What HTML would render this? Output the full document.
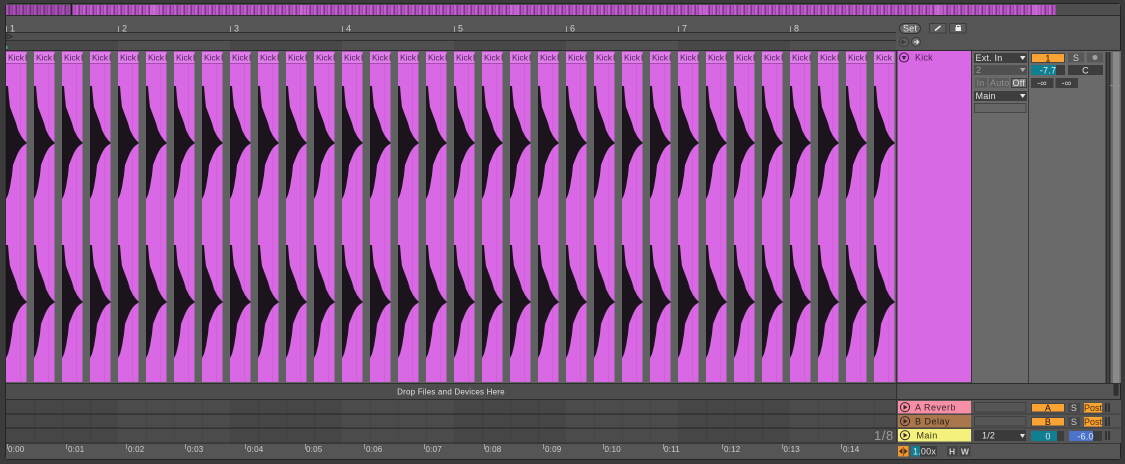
<!DOCTYPE html>
<html><head><meta charset="utf-8"><style>
html,body{margin:0;padding:0;background:#3b3b3b;width:1125px;height:464px;overflow:hidden}
svg{display:block;filter:blur(.3px)}
text{font-family:"Liberation Sans",sans-serif;letter-spacing:.2px}
.k{font-size:8.5px;fill:#4e1f5a;letter-spacing:0;word-spacing:-1.5px}
.b{font-size:9px;fill:#d0d0d0}
.t{font-size:8px;fill:#cfcfcf}
.d{font-size:9px;fill:#1d1408}
.l{font-size:9px;fill:#e2e2e2}
</style></head><body>
<svg width="1125" height="464" viewBox="0 0 1125 464" xmlns="http://www.w3.org/2000/svg">
<defs>
<pattern id="ov" width="7" height="10" patternUnits="userSpaceOnUse" x="6" y="5">
<rect width="7" height="10" fill="#9a4aa6"/><rect x="0" width="2" height="10" fill="#c35fd0"/><rect x="3" width="1" height="10" fill="#7b3b86"/><rect x="4" width="2" height="10" fill="#b355bf"/>
</pattern>
<g id="c">
<rect width="20.5" height="331" y="51" fill="#d968e4"/>
<rect x="14" y="64" width="1" height="318" fill="#cf60da"/>
<rect y="51" width="20.5" height="13" fill="#e07fea"/>
<path d="M0 51.5H20.5M0 63.5H20.5" stroke="#a94bb4" stroke-width="1" fill="none"/>
<path fill="#1b141c" d="M0 86L2 86L3 98L4 107L7 115L10 123L12 130L15 136L18 140L21 143L17 146L15 148L13 151L11 155L9 160L7 165L6 175L4 187L2 195L0 199Z"/>
<path fill="#1b141c" transform="translate(0 159)" d="M0 86L2 86L3 98L4 107L7 115L10 123L12 130L15 136L18 140L21 143L17 146L15 148L13 151L11 155L9 160L7 165L6 175L4 187L2 195L0 199Z"/>
</g>
<g id="pl"><circle r="4.6" fill="none" stroke="#3d2428" stroke-width="1"/><path d="M-1.5 -2.5L2.5 0L-1.5 2.5Z" fill="#3d2428"/></g>
</defs>

<!-- frame -->
<rect width="1125" height="464" fill="#3b3b3b"/>
<rect x="5" y="3" width="1116" height="456" rx="3" fill="#555"/>
<rect x="5.5" y="3.5" width="1115" height="456" rx="3" fill="none" stroke="#242424"/>

<!-- overview -->
<rect x="6" y="4" width="1114" height="11.5" fill="#4f4f4f"/>
<rect x="6" y="5" width="1050" height="10" fill="url(#ov)"/>
<rect x="6" y="5" width="65" height="10" fill="#3a1040" opacity=".18"/>
<rect x="150" y="5" width="8" height="10" fill="#d66fe2" opacity=".6"/><rect x="300" y="5" width="6" height="10" fill="#d66fe2" opacity=".5"/><rect x="510" y="5" width="9" height="10" fill="#d66fe2" opacity=".5"/><rect x="700" y="5" width="7" height="10" fill="#d66fe2" opacity=".5"/><rect x="935" y="5" width="7" height="10" fill="#d66fe2" opacity=".6"/><rect x="1032" y="5" width="8" height="10" fill="#d66fe2" opacity=".6"/>
<rect x="70.5" y="4" width="1.5" height="11" fill="#1c1c1c"/>
<rect x="5" y="15" width="1116" height="1" fill="#2b2b2b"/>

<!-- ruler -->
<rect x="6" y="16" width="1114" height="34" fill="#555"/>
<g fill="#303030"><rect x="6" y="32" width="890" height="1"/><rect x="6" y="40" width="890" height="1"/></g>
<rect x="6" y="33" width="890" height="7" fill="#505050"/>
<path d="M7 34L12 36.5L7 39Z" fill="none" stroke="#2e2e2e"/>
<rect x="6" y="41" width="890" height="9" fill="#484848"/>
<g fill="#505050"><rect x="118" y="41" width="112" height="9"/><rect x="342" y="41" width="112" height="9"/><rect x="566" y="41" width="112" height="9"/><rect x="790" y="41" width="106" height="9"/></g>
<g fill="#a8a8a8"><rect x="6" y="26" width="1" height="6"/><rect x="118" y="26" width="1" height="6"/><rect x="230" y="26" width="1" height="6"/><rect x="342" y="26" width="1" height="6"/><rect x="454" y="26" width="1" height="6"/><rect x="566" y="26" width="1" height="6"/><rect x="678" y="26" width="1" height="6"/><rect x="790" y="26" width="1" height="6"/></g>
<text class="b" x="10" y="31.5">1</text><text class="b" x="122" y="31.5">2</text><text class="b" x="234" y="31.5">3</text><text class="b" x="346" y="31.5">4</text><text class="b" x="458" y="31.5">5</text><text class="b" x="570" y="31.5">6</text><text class="b" x="682" y="31.5">7</text><text class="b" x="794" y="31.5">8</text>
<rect x="6" y="46" width="1.5" height="3" fill="#4aa0a8"/>

<!-- Set controls -->
<rect x="899.5" y="23.5" width="21" height="10" rx="5" fill="#686868" stroke="#333"/>
<text x="910" y="31.5" text-anchor="middle" style="font-size:9px;fill:#e4e4e4">Set</text>
<rect x="929.5" y="23.5" width="16.5" height="9.5" fill="#5c5c5c" stroke="#3d3d3d"/>
<path d="M935 30.5L940.5 26" stroke="#f0f0f0" stroke-width="1.5"/>
<rect x="949.5" y="23.5" width="16.5" height="9.5" fill="#5c5c5c" stroke="#3d3d3d"/>
<rect x="955.5" y="27" width="5.5" height="4" fill="#f0f0f0"/><path d="M956.5 27V25.5H960V27" fill="none" stroke="#f0f0f0"/>
<circle cx="904" cy="42" r="4.5" fill="#5f5f5f" stroke="#3b3b3b"/><path d="M906.2 42H901.8M903.5 40L901.5 42L903.500 44" stroke="#2f2f2f" fill="none"/>
<circle cx="916" cy="42" r="4.5" fill="#6c6c6c" stroke="#3b3b3b"/><path d="M913.8 42H918.2M916.5 40L918.5 42L916.5 44" stroke="#f0f0f0" fill="none"/>
<rect x="5" y="50" width="1116" height="1.2" fill="#2c2c2c"/>

<!-- clip lane -->
<rect x="6" y="51" width="890" height="332" fill="#606161"/>
<rect x="5" y="51" width="1" height="332" fill="#2f2f2f"/>
<use href="#c" x="6"/><use href="#c" x="34"/><use href="#c" x="62"/><use href="#c" x="90"/><use href="#c" x="118"/><use href="#c" x="146"/><use href="#c" x="174"/><use href="#c" x="202"/><use href="#c" x="230"/><use href="#c" x="258"/><use href="#c" x="286"/><use href="#c" x="314"/><use href="#c" x="342"/><use href="#c" x="370"/><use href="#c" x="398"/><use href="#c" x="426"/><use href="#c" x="454"/><use href="#c" x="482"/><use href="#c" x="510"/><use href="#c" x="538"/><use href="#c" x="566"/><use href="#c" x="594"/><use href="#c" x="622"/><use href="#c" x="650"/><use href="#c" x="678"/><use href="#c" x="706"/><use href="#c" x="734"/><use href="#c" x="762"/><use href="#c" x="790"/><use href="#c" x="818"/><use href="#c" x="846"/><use href="#c" x="874"/>
<text class="k" x="8" y="60.5">Kick I</text><text class="k" x="36" y="60.5">Kick I</text><text class="k" x="64" y="60.5">Kick I</text><text class="k" x="92" y="60.5">Kick I</text><text class="k" x="120" y="60.5">Kick I</text><text class="k" x="148" y="60.5">Kick I</text><text class="k" x="176" y="60.5">Kick I</text><text class="k" x="204" y="60.5">Kick I</text><text class="k" x="232" y="60.5">Kick I</text><text class="k" x="260" y="60.5">Kick I</text><text class="k" x="288" y="60.5">Kick I</text><text class="k" x="316" y="60.5">Kick I</text><text class="k" x="344" y="60.5">Kick I</text><text class="k" x="372" y="60.5">Kick I</text><text class="k" x="400" y="60.5">Kick I</text><text class="k" x="428" y="60.5">Kick I</text><text class="k" x="456" y="60.5">Kick I</text><text class="k" x="484" y="60.5">Kick I</text><text class="k" x="512" y="60.5">Kick I</text><text class="k" x="540" y="60.5">Kick I</text><text class="k" x="568" y="60.5">Kick I</text><text class="k" x="596" y="60.5">Kick I</text><text class="k" x="624" y="60.5">Kick I</text><text class="k" x="652" y="60.5">Kick I</text><text class="k" x="680" y="60.5">Kick I</text><text class="k" x="708" y="60.5">Kick I</text><text class="k" x="736" y="60.5">Kick I</text><text class="k" x="764" y="60.5">Kick I</text><text class="k" x="792" y="60.5">Kick I</text><text class="k" x="820" y="60.5">Kick I</text><text class="k" x="848" y="60.5">Kick I</text><text class="k" x="876" y="60.5">Kick</text>

<!-- track head -->
<rect x="896" y="51" width="1.5" height="332" fill="#333"/>
<rect x="897.5" y="51" width="73.5" height="331" fill="#d868e3"/>
<circle cx="904" cy="57.5" r="4.6" fill="none" stroke="#3f1d48"/><path d="M901.7 56L906.3 56L904 60Z" fill="#3f1d48"/>
<text x="915" y="60.5" style="font-size:9px;fill:#4e1f5a">Kick</text>
<rect x="971" y="51" width="1" height="332" fill="#333"/>
<rect x="972" y="51" width="56" height="332" fill="#6a6a6a"/>
<rect x="1028" y="51" width="1" height="332" fill="#3a3a3a"/>
<rect x="1029" y="51" width="92" height="332" fill="#6a6a6a"/>

<rect x="974" y="53" width="53" height="10" fill="#3e3e3e"/><text class="l" x="975.5" y="61">Ext. In</text><path d="M1020 56H1025.5L1022.7 60Z" fill="#e6e6e6"/>
<rect x="974" y="65" width="53" height="10" fill="#505050"/><text x="976" y="73" style="font-size:9px;fill:#999">2</text><path d="M1020 68H1025.5L1022.7 72Z" fill="#aaa"/>
<rect x="975" y="78" width="12" height="9.5" fill="#5b5b5b"/><text x="976.5" y="86" style="font-size:9px;fill:#909090">In</text>
<rect x="989" y="78" width="20" height="9.5" fill="#5b5b5b"/><text x="990" y="86" style="font-size:9px;fill:#909090">Auto</text>
<rect x="1011.5" y="78.500" width="15" height="9" fill="#6e6e6e" stroke="#3c3c3c"/><text x="1012.5" y="86" style="font-size:9px;fill:#e2e2e2">Off</text>
<rect x="974" y="91" width="53" height="10" fill="#3e3e3e"/><text class="l" x="975.5" y="99">Main</text><path d="M1020 94H1025.5L1022.7 98Z" fill="#e6e6e6"/>
<rect x="974.5" y="103.5" width="51.5" height="9" fill="#666" stroke="#454545"/>

<rect x="1031.5" y="53.5" width="33" height="9" fill="#fba433" stroke="#444"/><text x="1048" y="61.500" text-anchor="middle" class="d">1</text>
<rect x="1068" y="52.5" width="16" height="10" fill="#585858"/><text x="1076" y="61" text-anchor="middle" style="font-size:9px;fill:#d0d0d0">S</text>
<rect x="1087" y="52.5" width="16" height="10" fill="#585858"/><circle cx="1095" cy="57.5" r="2.5" fill="#a0a0a0"/>
<rect x="1031" y="65" width="34" height="10" fill="#3d3d3d"/><rect x="1031" y="65" width="25" height="10" fill="#107f92"/><text x="1048" y="73.500" text-anchor="middle" style="font-size:9px;fill:#d8ecf0">-7.7</text>
<rect x="1068" y="65" width="35" height="10" fill="#3d3d3d"/><text x="1085.5" y="73.500" text-anchor="middle" style="font-size:9px;fill:#e2e2e2">C</text>
<rect x="1031" y="78" width="22.5" height="10" fill="#3f3f3f"/><text x="1042" y="86" text-anchor="middle" style="font-size:9px;fill:#dcdcdc">-∞</text>
<rect x="1055.5" y="78" width="22.5" height="10" fill="#3f3f3f"/><text x="1066.5" y="86" text-anchor="middle" style="font-size:9px;fill:#dcdcdc">-∞</text>

<rect x="1105.5" y="52" width="5" height="331" fill="#2e2e2e"/><rect x="1107.5" y="52" width="1" height="331" fill="#555"/>
<rect x="1113" y="52" width="6.5" height="331" fill="#8a8a8a"/>
<rect x="1110" y="85" width="10" height="1" fill="#8c8c8c"/>

<!-- drop row -->
<rect x="6" y="383" width="1114" height="1" fill="#2e2e2e"/>
<rect x="6" y="384" width="890" height="15" fill="#4d4d4d"/>
<rect x="898" y="384" width="222" height="15" fill="#555"/>
<text x="451" y="394.5" text-anchor="middle" style="font-size:8px;fill:#e0e0e0">Drop Files and Devices Here</text>
<rect x="1113.5" y="383" width="5" height="13" rx="2" fill="#2f2f2f"/>
<rect x="5" y="399" width="1116" height="1.2" fill="#2c2c2c"/>

<!-- return lanes -->
<rect x="6" y="400" width="890" height="43" fill="#464646"/>
<g fill="#4b4b4b"><rect x="118" y="400" width="112" height="43"/><rect x="342" y="400" width="112" height="43"/><rect x="566" y="400" width="112" height="43"/><rect x="790" y="400" width="106" height="43"/></g>
<g fill="#3f3f3f"><rect x="34" y="400" width="1" height="43"/><rect x="62" y="400" width="1" height="43"/><rect x="90" y="400" width="1" height="43"/><rect x="146" y="400" width="1" height="43" opacity=".4"/><rect x="174" y="400" width="1" height="43" opacity=".4"/><rect x="202" y="400" width="1" height="43" opacity=".4"/><rect x="258" y="400" width="1" height="43"/><rect x="286" y="400" width="1" height="43"/><rect x="314" y="400" width="1" height="43"/><rect x="370" y="400" width="1" height="43" opacity=".4"/><rect x="398" y="400" width="1" height="43" opacity=".4"/><rect x="426" y="400" width="1" height="43" opacity=".4"/><rect x="482" y="400" width="1" height="43"/><rect x="510" y="400" width="1" height="43"/><rect x="538" y="400" width="1" height="43"/><rect x="594" y="400" width="1" height="43" opacity=".4"/><rect x="622" y="400" width="1" height="43" opacity=".4"/><rect x="650" y="400" width="1" height="43" opacity=".4"/><rect x="706" y="400" width="1" height="43"/><rect x="734" y="400" width="1" height="43"/><rect x="762" y="400" width="1" height="43"/><rect x="818" y="400" width="1" height="43" opacity=".4"/><rect x="846" y="400" width="1" height="43" opacity=".4"/><rect x="874" y="400" width="1" height="43" opacity=".4"/></g>
<rect x="896" y="383" width="1.2" height="60" fill="#333"/>
<rect x="6" y="413.5" width="890" height="1.2" fill="#2c2c2c"/>
<rect x="6" y="427.5" width="890" height="1.2" fill="#2c2c2c"/>
<rect x="5" y="442.5" width="1116" height="1.2" fill="#2c2c2c"/>
<rect x="897" y="400" width="224" height="43" fill="#555"/>
<rect x="897" y="413.5" width="224" height="1" fill="#3a3a3a"/>
<rect x="897" y="427.5" width="224" height="1" fill="#3a3a3a"/>

<!-- return heads -->
<rect x="898" y="401" width="73" height="12.5" fill="#f78fa7"/>
<rect x="898" y="415" width="73" height="12.5" fill="#a9774c"/>
<rect x="898" y="429" width="73" height="12.5" fill="#f4f27c"/>
<use href="#pl" x="905" y="407.2"/><use href="#pl" x="905" y="421.2"/><use href="#pl" x="905" y="435.2"/>
<text x="915" y="410.5" style="font-size:9px;fill:#40242a;letter-spacing:.5px">A Reverb</text>
<text x="915" y="424.5" style="font-size:9px;fill:#2c1f14;letter-spacing:.5px">B Delay</text>
<text x="916.5" y="438.5" style="font-size:9px;fill:#33331a;letter-spacing:.4px">Main</text>

<rect x="974.5" y="402.5" width="51.5" height="9.5" fill="#565656" stroke="#404040"/>
<rect x="974.5" y="416.5" width="51.5" height="9.5" fill="#565656" stroke="#404040"/>
<rect x="974" y="430" width="52" height="11" fill="#3a3a3a"/><text x="982" y="438.5" style="font-size:9px;fill:#e2e2e2">1/2</text><path d="M1020 434H1025L1022.5 438Z" fill="#e6e6e6"/>

<rect x="1031.5" y="403.5" width="33" height="8.5" fill="#fba433" stroke="#444"/><text x="1048" y="411" text-anchor="middle" class="d">A</text>
<rect x="1031.5" y="417.5" width="33" height="8.5" fill="#fba433" stroke="#444"/><text x="1048" y="425" text-anchor="middle" class="d">B</text>
<rect x="1068" y="403" width="12" height="9.5" fill="#474747"/><text x="1074" y="411" text-anchor="middle" style="font-size:9px;fill:#d0d0d0">S</text>
<rect x="1068" y="417" width="12" height="9.500" fill="#474747"/><text x="1074" y="425" text-anchor="middle" style="font-size:9px;fill:#d0d0d0">S</text>
<rect x="1084" y="403" width="18" height="9.5" fill="#fba433"/><text x="1093" y="411" text-anchor="middle" style="font-size:9px;fill:#4d2f0c;letter-spacing:0">Post</text>
<rect x="1084" y="417" width="18" height="9.5" fill="#fba433"/><text x="1093" y="425" text-anchor="middle" style="font-size:9px;fill:#4d2f0c;letter-spacing:0">Post</text>
<g fill="#333"><rect x="1105" y="403" width="2" height="9"/><rect x="1108" y="403" width="2" height="9"/><rect x="1105" y="417" width="2" height="9"/><rect x="1108" y="417" width="2" height="9"/><rect x="1105" y="431" width="2" height="9"/><rect x="1108" y="431" width="2" height="9"/></g>
<rect x="1031" y="431" width="33" height="10" fill="#3d3d3d"/><rect x="1031" y="431" width="26" height="10" fill="#107f92"/><text x="1048" y="439.5" text-anchor="middle" style="font-size:9px;fill:#d8ecf0">0</text>
<rect x="1069" y="431" width="33" height="10" fill="#3d3d3d"/><rect x="1069" y="431" width="24" height="10" fill="#4a74c9"/><text x="1085.5" y="439.5" text-anchor="middle" style="font-size:9px;fill:#e0e8f7">-6.0</text>

<text x="874" y="440" style="font-size:13px;fill:#9c9c9c;letter-spacing:.6px">1/8</text>

<!-- time ruler -->
<rect x="6" y="444" width="1114" height="15" fill="#555"/>
<g fill="#a0a0a0"><rect x="7" y="444" width="1" height="5"/><rect x="66" y="444" width="1" height="5"/><rect x="126" y="444" width="1" height="5"/><rect x="185" y="444" width="1" height="5"/><rect x="245" y="444" width="1" height="5"/><rect x="305" y="444" width="1" height="5"/><rect x="364" y="444" width="1" height="5"/><rect x="424" y="444" width="1" height="5"/><rect x="484" y="444" width="1" height="5"/><rect x="543" y="444" width="1" height="5"/><rect x="603" y="444" width="1" height="5"/><rect x="663" y="444" width="1" height="5"/><rect x="722" y="444" width="1" height="5"/><rect x="782" y="444" width="1" height="5"/><rect x="841" y="444" width="1" height="5"/></g>
<text class="t" x="8" y="452">0:00</text><text class="t" x="68" y="452">0:01</text><text class="t" x="128" y="452">0:02</text><text class="t" x="187" y="452">0:03</text><text class="t" x="247" y="452">0:04</text><text class="t" x="306" y="452">0:05</text><text class="t" x="366" y="452">0:06</text><text class="t" x="425.5" y="452">0:07</text><text class="t" x="485" y="452">0:08</text><text class="t" x="545" y="452">0:09</text><text class="t" x="604.5" y="452">0:10</text><text class="t" x="664" y="452">0:11</text><text class="t" x="724" y="452">0:12</text><text class="t" x="783.5" y="452">0:13</text><text class="t" x="843" y="452">0:14</text>

<!-- bottom right -->
<rect x="898" y="446" width="10.5" height="10.5" fill="#f0962f"/><path d="M903.2 447V456M902 449L899.5 451.2L902 453.5ZM904.5 449L907 451.2L904.5 453.5Z" fill="#4a2c10" stroke="#4a2c10" stroke-width=".6"/>
<rect x="911" y="446" width="26" height="10.5" fill="#3d3d3d"/><rect x="911" y="446" width="9" height="10.5" fill="#107f92"/><text x="913" y="454.5" style="font-size:9px;fill:#e2e2e2">1.00x</text>
<rect x="947" y="446" width="10.5" height="10.5" fill="#434343"/><text x="952.2" y="454.5" text-anchor="middle" style="font-size:8.5px;font-weight:bold;fill:#d0d0d0">H</text>
<rect x="959.5" y="446" width="11" height="10.5" fill="#434343"/><text x="965" y="454.5" text-anchor="middle" style="font-size:8.5px;font-weight:bold;fill:#d0d0d0">W</text>
</svg>
</body></html>
